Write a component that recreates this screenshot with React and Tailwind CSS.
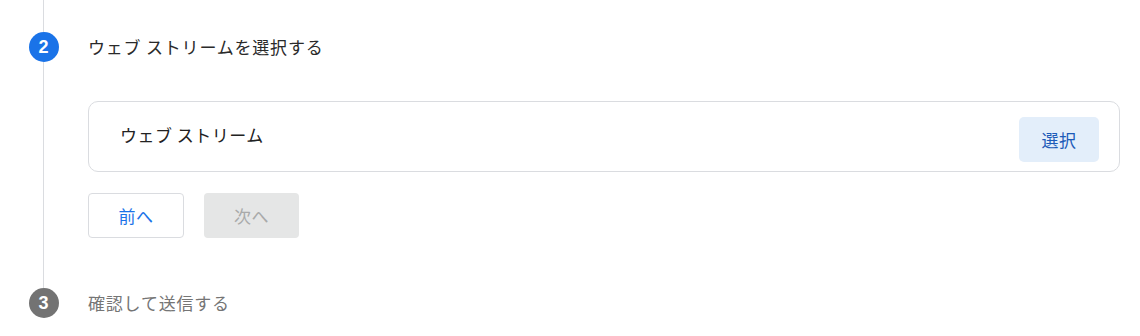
import React from 'react';

const FONT = { fontFamily: '"Noto Sans CJK JP", "Noto Sans", sans-serif' };

function StepCircle({ n, active }) {
  return (
    <div
      className={`flex h-[30px] w-[30px] shrink-0 items-center justify-center rounded-full text-[18px] font-bold leading-none text-white ${
        active ? 'bg-[#1a73e8]' : 'bg-[#737373]'
      }`}
      style={{ fontFamily: '"Liberation Sans", Arial, sans-serif' }}
    >
      {n}
    </div>
  );
}

export default function App() {
  return (
    <div className="h-[336px] w-[1140px] overflow-hidden bg-white" style={FONT}>
      {/* Step 2 */}
      <div className="flex">
        <div className="flex w-[87px] shrink-0 flex-col items-center">
          <div className="h-[32px] w-px bg-[#dadce0]" />
          <StepCircle n="2" active />
          <div className="w-px flex-1 bg-[#dadce0]" />
        </div>
        <div className="ml-[1px] flex-1 pt-[32px] pr-[20px] pb-[50px]">
          <div className="flex h-[30px] items-center text-[17px] tracking-[0.8px] text-[#2a2a2a]">
            ウェブ ストリームを選択する
          </div>

          <div className="mt-[39px] flex h-[71px] items-start rounded-[10px] border border-[#dadce0] pt-[15px] pr-[20px] pl-[31px]">
            <div className="mt-[5px] flex-1 text-[17px] tracking-[0.5px] text-[#222]">ウェブ ストリーム</div>
            <button className="flex h-[45px] w-[80px] items-center justify-center rounded-[5px] bg-[#e3eefa] text-[17px] tracking-[0.5px] text-[#1c5bb8]">
              選択
            </button>
          </div>

          <div className="mt-[21px] flex gap-[20px]">
            <button className="flex h-[45px] w-[96px] items-center justify-center rounded-[4px] border border-[#dadce0] bg-white text-[17px] tracking-[0.5px] text-[#1a73e8]">
              前へ
            </button>
            <button className="flex h-[45px] w-[95px] items-center justify-center rounded-[4px] bg-[#e5e6e6] text-[17px] tracking-[0.5px] text-[#a9aaaa]">
              次へ
            </button>
          </div>
        </div>
      </div>

      {/* Step 3 */}
      <div className="flex">
        <div className="flex w-[87px] shrink-0 flex-col items-center">
          <StepCircle n="3" />
        </div>
        <div className="ml-[1px] flex h-[30px] items-center text-[17px] tracking-[0.8px] text-[#757575]">
          確認して送信する
        </div>
      </div>
    </div>
  );
}
